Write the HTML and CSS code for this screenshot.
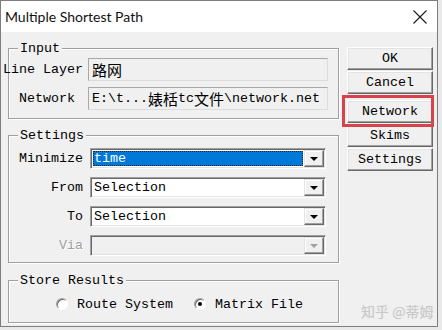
FILE: index.html
```html
<!DOCTYPE html>
<html lang="zh">
<head>
    <meta charset="UTF-8">
    <meta name="viewport" content="width=device-width, initial-scale=1.0">
    <title>Multiple Shortest Path</title>
    <link rel="stylesheet" href="styles.css">
</head>
<body>

<div class="window">
    <!-- Title bar -->
    <div class="titlebar">
        <span class="title">Multiple Shortest Path</span>
        <svg class="close" width="14" height="14" viewBox="0 0 14 14">
            <path d="M0.5 0.5 L13.5 13.5 M13.5 0.5 L0.5 13.5" stroke="#1a1a1a" stroke-width="1.1" fill="none"/>
        </svg>
    </div>

    <div class="panel">
        <div class="groups">

            <!-- Input -->
            <div class="group group-input">
                <span class="legend">Input</span>
                <div class="form-grid input-grid">
                    <label class="lbl">Line Layer</label>
                    <div class="edit"><span class="cjk">路网</span></div>
                    <label class="lbl lbl-network">Network</label>
                    <div class="edit">E:\t...<span class="cjk">婊栝</span>tc<span class="cjk">文件</span>\network.net</div>
                </div>
            </div>

            <!-- Settings -->
            <div class="group group-settings">
                <span class="legend">Settings</span>
                <div class="form-grid settings-grid">
                    <label class="lbl">Minimize</label>
                    <div class="combo">
                        <div class="value selected"><span class="focus">time</span></div>
                        <div class="drop"><i class="arrow"></i></div>
                    </div>

                    <label class="lbl">From</label>
                    <div class="combo">
                        <div class="value">Selection</div>
                        <div class="drop"><i class="arrow"></i></div>
                    </div>

                    <label class="lbl">To</label>
                    <div class="combo">
                        <div class="value">Selection</div>
                        <div class="drop"><i class="arrow"></i></div>
                    </div>

                    <label class="lbl disabled">Via</label>
                    <div class="combo combo-disabled">
                        <div class="value"></div>
                        <div class="drop"><i class="arrow"></i></div>
                    </div>
                </div>
            </div>

            <!-- Store Results -->
            <div class="group group-store">
                <span class="legend">Store Results</span>
                <div class="radio-row">
                    <span class="radio-item"><i class="radio"></i>Route System</span>
                    <span class="radio-item"><i class="radio checked"></i>Matrix File</span>
                </div>
            </div>
        </div>

        <!-- Buttons -->
        <div class="buttons">
            <button class="btn">OK</button>
            <button class="btn">Cancel</button>
            <div class="marked">
                <button class="btn">Network</button>
                <span class="mark"></span>
            </div>
            <button class="btn">Skims</button>
            <button class="btn">Settings</button>
        </div>

        <div class="watermark">知乎 @蒂姆</div>
    </div>
</div>

</body>
</html>
```

FILE: styles.css
```css
body {
    margin: 0;
    background: #e9e9e9;
    font-family: "Liberation Mono", "Noto Sans CJK SC", monospace;
    font-size: 13.34px;
    color: #000;
}

.cjk { font-family: "Noto Sans CJK SC", sans-serif; font-size: 15px; }

/* Window */
.window {
    position: relative;
    width: 438px;
    height: 327px;
    box-sizing: border-box;
    border: 1px solid #7d7d7d;
    background: #f0f0f0;
}

.titlebar {
    height: 31px;
    background: #fff;
    display: flex;
    align-items: center;
    justify-content: space-between;
    padding: 0 10px 0 4px;
}

.title {
    font-family: Lato, "Noto Sans", sans-serif;
    font-size: 14px;
    color: #111;
}

.close { margin-top: 1px; }

.panel {
    display: flex;
    padding: 16px 0 0 7px;
}

/* Group boxes */
.groups { width: 331px; }

.group {
    position: relative;
    border: 1px solid #a0a0a0;
    box-shadow: 1px 1px #fff, inset 1px 1px #fff;
}

.legend {
    position: absolute;
    top: -8px;
    left: 9px;
    padding: 0 2px;
    line-height: 15px;
    background: #f0f0f0;
}

.group-input { height: 71px; box-sizing: border-box; padding-top: 9px; }
.group-settings { height: 128px; box-sizing: border-box; margin-top: 16px; padding-top: 12px; }
.group-store { height: 43px; box-sizing: border-box; margin-top: 17px; padding-top: 15px; }

.form-grid { display: grid; align-items: center; }

.input-grid {
    grid-template-columns: 79px 240px;
    column-gap: 6px;
    row-gap: 6px;
    margin-left: -6px;
}

.settings-grid {
    grid-template-columns: 74px 236px;
    column-gap: 7px;
    row-gap: 8px;
}

.lbl { text-align: right; white-space: nowrap; }
.lbl-network { padding-right: 7px; }
.lbl.disabled { color: #a0a0a0; text-shadow: 1px 1px #fff; }

.edit {
    height: 23px;
    box-sizing: border-box;
    display: flex;
    align-items: center;
    padding-left: 3px;
    border: 1px solid;
    border-color: #a8a8a8 #dcdcdc #dcdcdc #a8a8a8;
    background: #f0f0f0;
    white-space: nowrap;
    overflow: hidden;
}

/* Combo boxes */
.combo {
    height: 21px;
    box-sizing: border-box;
    display: flex;
    padding: 1px;
    border: 1px solid;
    border-color: #a0a0a0 #fff #fff #a0a0a0;
    box-shadow: inset 1px 1px #696969, inset -1px -1px #e3e3e3;
    background: #fff;
}

.combo .value {
    flex: 1;
    display: flex;
    align-items: center;
    padding-left: 1px;
    margin: 1px;
}

.combo .value.selected {
    background: #0078d7;
    color: #fff;
    outline: 1px dotted #222;
    outline-offset: -1px;
}

.drop {
    width: 18px;
    display: flex;
    align-items: center;
    justify-content: center;
    background: #f0f0f0;
    border: 1px solid;
    border-color: #e3e3e3 #696969 #696969 #e3e3e3;
    box-shadow: inset -1px -1px #a0a0a0, inset 1px 1px #fff;
}

.arrow {
    width: 0;
    height: 0;
    border-left: 4px solid transparent;
    border-right: 4px solid transparent;
    border-top: 4px solid #000;
    margin-top: 1px;
}

.combo-disabled { background: #f0f0f0; }
.combo-disabled .arrow { border-top-color: #a0a0a0; }

/* Radios */
.radio-row {
    display: flex;
    align-items: center;
    height: 16px;
    padding-left: 47px;
}

.radio-item { display: flex; align-items: center; gap: 9px; margin-right: 21px; }

.radio {
    position: relative;
    width: 12px;
    height: 12px;
    box-sizing: border-box;
    border-radius: 50%;
    border: 1px solid;
    border-color: #a0a0a0 #fff #fff #a0a0a0;
    box-shadow: inset 1px 1px #696969;
    background: #fff;
}

.radio.checked::after {
    content: "";
    position: absolute;
    left: 3px;
    top: 3px;
    width: 4px;
    height: 4px;
    border-radius: 50%;
    background: #000;
}

/* Buttons */
.buttons {
    display: flex;
    flex-direction: column;
    align-self: flex-start;
    width: 86px;
    margin: -1px 0 0 8px;
    gap: 1px;
}

.btn {
    height: 23px;
    padding: 0;
    font: inherit;
    color: #000;
    background: #f0f0f0;
    border: 1px solid;
    border-color: #fff #696969 #696969 #fff;
    box-shadow: inset -1px -1px #a0a0a0, inset 1px 1px #e3e3e3;
}

.marked { position: relative; display: flex; flex-direction: column; margin-top: 5px; }

.mark {
    position: absolute;
    left: -5px;
    top: -5px;
    right: -1px;
    bottom: -4px;
    border: 3px solid #d8434b;
}

.watermark {
    position: absolute;
    left: 360px;
    top: 300px;
    font-family: "Noto Sans CJK SC", sans-serif;
    font-size: 14px;
    color: #c8c8c8;
    text-shadow: 0 0 1px #e0e0e0;
}
```
